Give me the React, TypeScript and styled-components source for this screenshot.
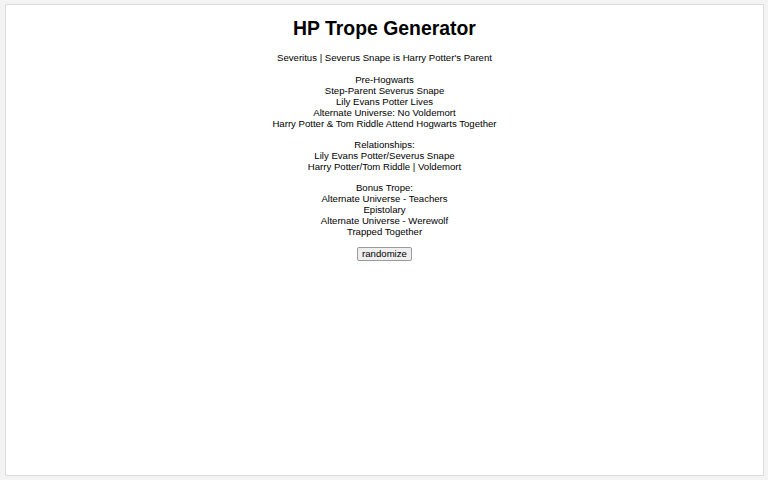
import React from 'react';
import styled, { createGlobalStyle } from 'styled-components';

const GlobalStyle = createGlobalStyle`
  html, body {
    margin: 0;
    padding: 0;
    background: #f3f3f3;
  }
  body {
    font-family: "Liberation Sans", Arial, sans-serif;
    color: #000;
  }
`;

const Page = styled.div`
  box-sizing: border-box;
  margin: 4px 4px 0 5px;
  height: 472px;
  background: #fff;
  border: 1px solid #dcdcdc;
  padding-top: 12px;
  text-align: center;
`;

const Title = styled.h1`
  margin: 0 0 12px;
  font-size: 19.4px;
  line-height: 23px;
  font-weight: bold;
`;

const Group = styled.p`
  margin: 0 0 10px;
  font-size: 9.6px;
  line-height: 11px;

  &:first-of-type {
    margin-bottom: 11px;
  }
  &:last-of-type {
    margin-bottom: 6px;
  }
`;

const Line = styled.span`
  display: block;
`;

const RandomButton = styled.button`
  box-sizing: border-box;
  height: 14px;
  font-family: "Liberation Sans", Arial, sans-serif;
  font-size: 9.6px;
  line-height: 11px;
  padding: 0 4px;
  background: #efefef;
  border: 1px solid #9a9a9a;
  border-radius: 2px;
  color: #000;
`;

interface TropeGroup {
  lines: string[];
}

const groups: TropeGroup[] = [
  { lines: ["Severitus | Severus Snape is Harry Potter's Parent"] },
  {
    lines: [
      'Pre-Hogwarts',
      'Step-Parent Severus Snape',
      'Lily Evans Potter Lives',
      'Alternate Universe: No Voldemort',
      'Harry Potter & Tom Riddle Attend Hogwarts Together',
    ],
  },
  {
    lines: [
      'Relationships:',
      'Lily Evans Potter/Severus Snape',
      'Harry Potter/Tom Riddle | Voldemort',
    ],
  },
  {
    lines: [
      'Bonus Trope:',
      'Alternate Universe - Teachers',
      'Epistolary',
      'Alternate Universe - Werewolf',
      'Trapped Together',
    ],
  },
];

const App: React.FunctionComponent = () => (
  <>
    <GlobalStyle />
    <Page>
      <Title>HP Trope Generator</Title>
      {groups.map((group) => (
        <Group key={group.lines[0]}>
          {group.lines.map((line) => (
            <Line key={line}>{line}</Line>
          ))}
        </Group>
      ))}
      <RandomButton type="button">randomize</RandomButton>
    </Page>
  </>
);

export default App;
